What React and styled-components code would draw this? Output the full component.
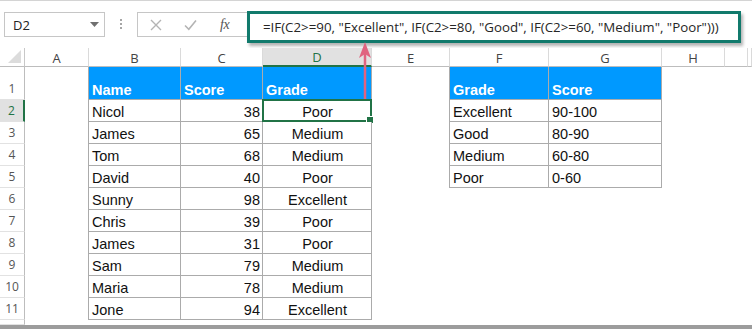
import React from 'react';
import styled, { createGlobalStyle } from 'styled-components';

const GlobalStyle = createGlobalStyle`
  html, body {
    margin: 0;
    padding: 0;
    background: #ffffff;
    overflow: hidden;
  }
  * { box-sizing: border-box; }
`;

const COLS = ['A', 'B', 'C', 'D', 'E', 'F', 'G', 'H', ''];

const people = [
  ['Nicol', 38, 'Poor'],
  ['James', 65, 'Medium'],
  ['Tom', 68, 'Medium'],
  ['David', 40, 'Poor'],
  ['Sunny', 98, 'Excellent'],
  ['Chris', 39, 'Poor'],
  ['James', 31, 'Poor'],
  ['Sam', 79, 'Medium'],
  ['Maria', 78, 'Medium'],
  ['Jone', 94, 'Excellent'],
];

const grades = [
  ['Excellent', '90-100'],
  ['Good', '80-90'],
  ['Medium', '60-80'],
  ['Poor', '0-60'],
];

const Page = styled.div`
  width: 752px;
  height: 329px;
  position: relative;
  background: #fff;
  border-top: 1px solid #d4d4d4;
  font-family: "Liberation Sans", Arial, sans-serif;
`;

const Toolbar = styled.div`
  height: 47px;
  display: flex;
  align-items: flex-start;
  padding: 10px 0 0 4px;
`;

const NameBox = styled.div`
  width: 101px;
  height: 25px;
  margin-top: 1px;
  border: 1px solid #c6c6c6;
  display: flex;
  align-items: center;
  justify-content: space-between;
  padding: 0 5px 0 8px;
  font-family: "Open Sans", "Noto Sans", sans-serif;
  font-size: 13px;
  color: #222;
`;

const Dots = styled.div`
  width: 32px;
  display: flex;
  flex-direction: column;
  align-items: center;
  gap: 2px;
  padding-top: 8px;

  span {
    width: 2px;
    height: 2px;
    background: #a6a6a6;
  }
`;

const FxBox = styled.div`
  width: 111px;
  height: 25px;
  margin-top: 1px;
  border: 1px solid #c6c6c6;
  border-right: none;
  display: flex;
  align-items: center;
  gap: 22px;
  padding: 0 0 0 12px;
`;

const Fx = styled.span`
  font-family: "Liberation Serif", "DejaVu Serif", serif;
  font-style: italic;
  font-size: 14px;
  color: #555;
  letter-spacing: -0.5px;
  margin-left: 1px;
`;

const FormulaBox = styled.div`
  width: 494px;
  height: 32px;
  border: 3px solid #117a6c;
  box-shadow: 2px 3px 3px rgba(0, 0, 0, 0.3);
  display: flex;
  align-items: center;
  padding-left: 13px;
  font-family: "Open Sans", "Noto Sans", sans-serif;
  font-size: 13.3px;
  color: #262626;
  white-space: nowrap;
  margin-left: -1px;
`;

const Sheet = styled.div`
  display: grid;
  grid-template-columns: 25px 64px 92px 82px 109px 78px 99px 113px 63px 23px 1fr;
  grid-template-rows: 19px 33px repeat(10, 22px) 5px 4px;
`;

const Corner = styled.div`
  border-right: 1px solid #c8c8c8;
  border-bottom: 1px solid #bdbdbd;
  position: relative;

  &::after {
    content: '';
    position: absolute;
    right: 3px;
    bottom: 3px;
    width: 0;
    height: 0;
    border-left: 13px solid transparent;
    border-bottom: 13px solid #dcdcdc;
  }
`;

const ColHead = styled.div`
  border-right: 1px solid #dadada;
  border-bottom: ${p => (p.$active ? '2px solid #217346' : '1px solid #bdbdbd')};
  background: ${p => (p.$active ? '#e1e1e1' : '#fff')};
  color: ${p => (p.$active ? '#217346' : '#444')};
  font-family: "Open Sans", "Noto Sans", sans-serif;
  font-size: 13px;
  display: flex;
  align-items: center;
  justify-content: center;
  padding-top: 1px;
`;

const RowHead = styled.div`
  border-right: ${p => (p.$active ? '2px solid #217346' : '1px solid #bdbdbd')};
  border-bottom: 1px solid #e2e2e2;
  background: ${p => (p.$active ? '#e1e1e1' : '#fff')};
  color: ${p => (p.$active ? '#217346' : '#555')};
  font-family: "Open Sans", "Noto Sans", sans-serif;
  font-size: 12px;
  display: flex;
  align-items: flex-end;
  justify-content: center;
  padding-bottom: 2px;
`;

const Blank = styled.div``;

const Cell = styled.div`
  position: relative;
  display: flex;
  align-items: flex-end;
  justify-content: ${p => (p.$align === 'right' ? 'flex-end' : p.$align === 'center' ? 'center' : 'flex-start')};
  padding: 0 2px 1px 3px;
  font-size: 14.5px;
  white-space: nowrap;
  border-right: 1px solid #ababab;
  border-bottom: 1px solid #ababab;
  border-left: ${p => (p.$first ? '1px solid #ababab' : 'none')};
  margin-left: ${p => (p.$first ? '-1px' : '0')};
  background: ${p => (p.$head ? '#0099ff' : '#fff')};
  color: ${p => (p.$head ? '#fff' : '#111')};
  font-weight: ${p => (p.$head ? 'bold' : 'normal')};
`;

const Selection = styled.div`
  position: absolute;
  left: -1px;
  top: -1px;
  right: -1px;
  bottom: -1px;
  border: 2px solid #217346;
  pointer-events: none;

  &::after {
    content: '';
    position: absolute;
    right: -4px;
    bottom: -4px;
    width: 6px;
    height: 6px;
    background: #217346;
    border: 1px solid #fff;
  }
`;

const BottomBar = styled.div`
  grid-column: 1 / -1;
  background: #9c9c9c;
`;

const Arrow = styled.svg`
  position: absolute;
  left: 358px;
  top: 40px;
  overflow: visible;
`;

const XIcon = () => (
  <svg width="12" height="12" viewBox="0 0 12 12">
    <path d="M1 1 L11 11 M11 1 L1 11" stroke="#b4b4b4" strokeWidth="1.4" fill="none" />
  </svg>
);

const CheckIcon = () => (
  <svg width="13" height="12" viewBox="0 0 13 12">
    <path d="M1 6.5 L4.8 10.2 L12 1.5" stroke="#b4b4b4" strokeWidth="1.6" fill="none" />
  </svg>
);

const DropArrow = () => (
  <svg width="9" height="5" viewBox="0 0 9 5">
    <path d="M0 0 H9 L4.5 5 Z" fill="#707070" />
  </svg>
);

const renderRow = (r) => {
  const cells = [];
  const active = r === 2;
  cells.push(<RowHead key="rh" $active={active}>{r}</RowHead>);
  cells.push(<Blank key="a" />);

  if (r === 1) {
    cells.push(<Cell key="b" $head $first>Name</Cell>);
    cells.push(<Cell key="c" $head>Score</Cell>);
    cells.push(<Cell key="d" $head>Grade</Cell>);
  } else {
    const [name, score, grade] = people[r - 2];
    cells.push(<Cell key="b" $first>{name}</Cell>);
    cells.push(<Cell key="c" $align="right">{score}</Cell>);
    cells.push(
      <Cell key="d" $align="center">
        {grade}
        {active && <Selection />}
      </Cell>
    );
  }

  cells.push(<Blank key="e" />);

  if (r === 1) {
    cells.push(<Cell key="f" $head $first>Grade</Cell>);
    cells.push(<Cell key="g" $head>Score</Cell>);
  } else if (r <= 5) {
    const [g, s] = grades[r - 2];
    cells.push(<Cell key="f" $first>{g}</Cell>);
    cells.push(<Cell key="g">{s}</Cell>);
  } else {
    cells.push(<Blank key="f" />);
    cells.push(<Blank key="g" />);
  }

  cells.push(<Blank key="h" />);
  cells.push(<Blank key="i" />);
  cells.push(<Blank key="j" />);
  return <React.Fragment key={r}>{cells}</React.Fragment>;
};

export default function App() {
  const rows = Array.from({ length: 11 }, (_, i) => i + 1);
  return (
    <>
      <GlobalStyle />
      <Page>
        <Toolbar>
          <NameBox>
            D2
            <DropArrow />
          </NameBox>
          <Dots>
            <span /><span /><span />
          </Dots>
          <FxBox>
            <XIcon />
            <CheckIcon />
            <Fx>fx</Fx>
          </FxBox>
          <FormulaBox>
            =IF(C2&gt;=90, "Excellent", IF(C2&gt;=80, "Good", IF(C2&gt;=60, "Medium", "Poor")))
          </FormulaBox>
        </Toolbar>

        <Sheet>
          <Corner />
          {COLS.map((c, i) => (
            <ColHead key={i} $active={c === 'D'}>{c}</ColHead>
          ))}
          <ColHead />
          {rows.map(renderRow)}
          <RowHead />
          {Array.from({ length: 10 }, (_, i) => <Blank key={'tail' + i} />)}
          <BottomBar />
        </Sheet>

        <Arrow width="16" height="60" viewBox="0 0 16 60">
          <path d="M7 58 V12" stroke="#e0637f" strokeWidth="2.5" fill="none" />
          <path d="M7 1 L13 17 L7 13 L1 17 Z" fill="#e0637f" />
        </Arrow>
      </Page>
    </>
  );
}
